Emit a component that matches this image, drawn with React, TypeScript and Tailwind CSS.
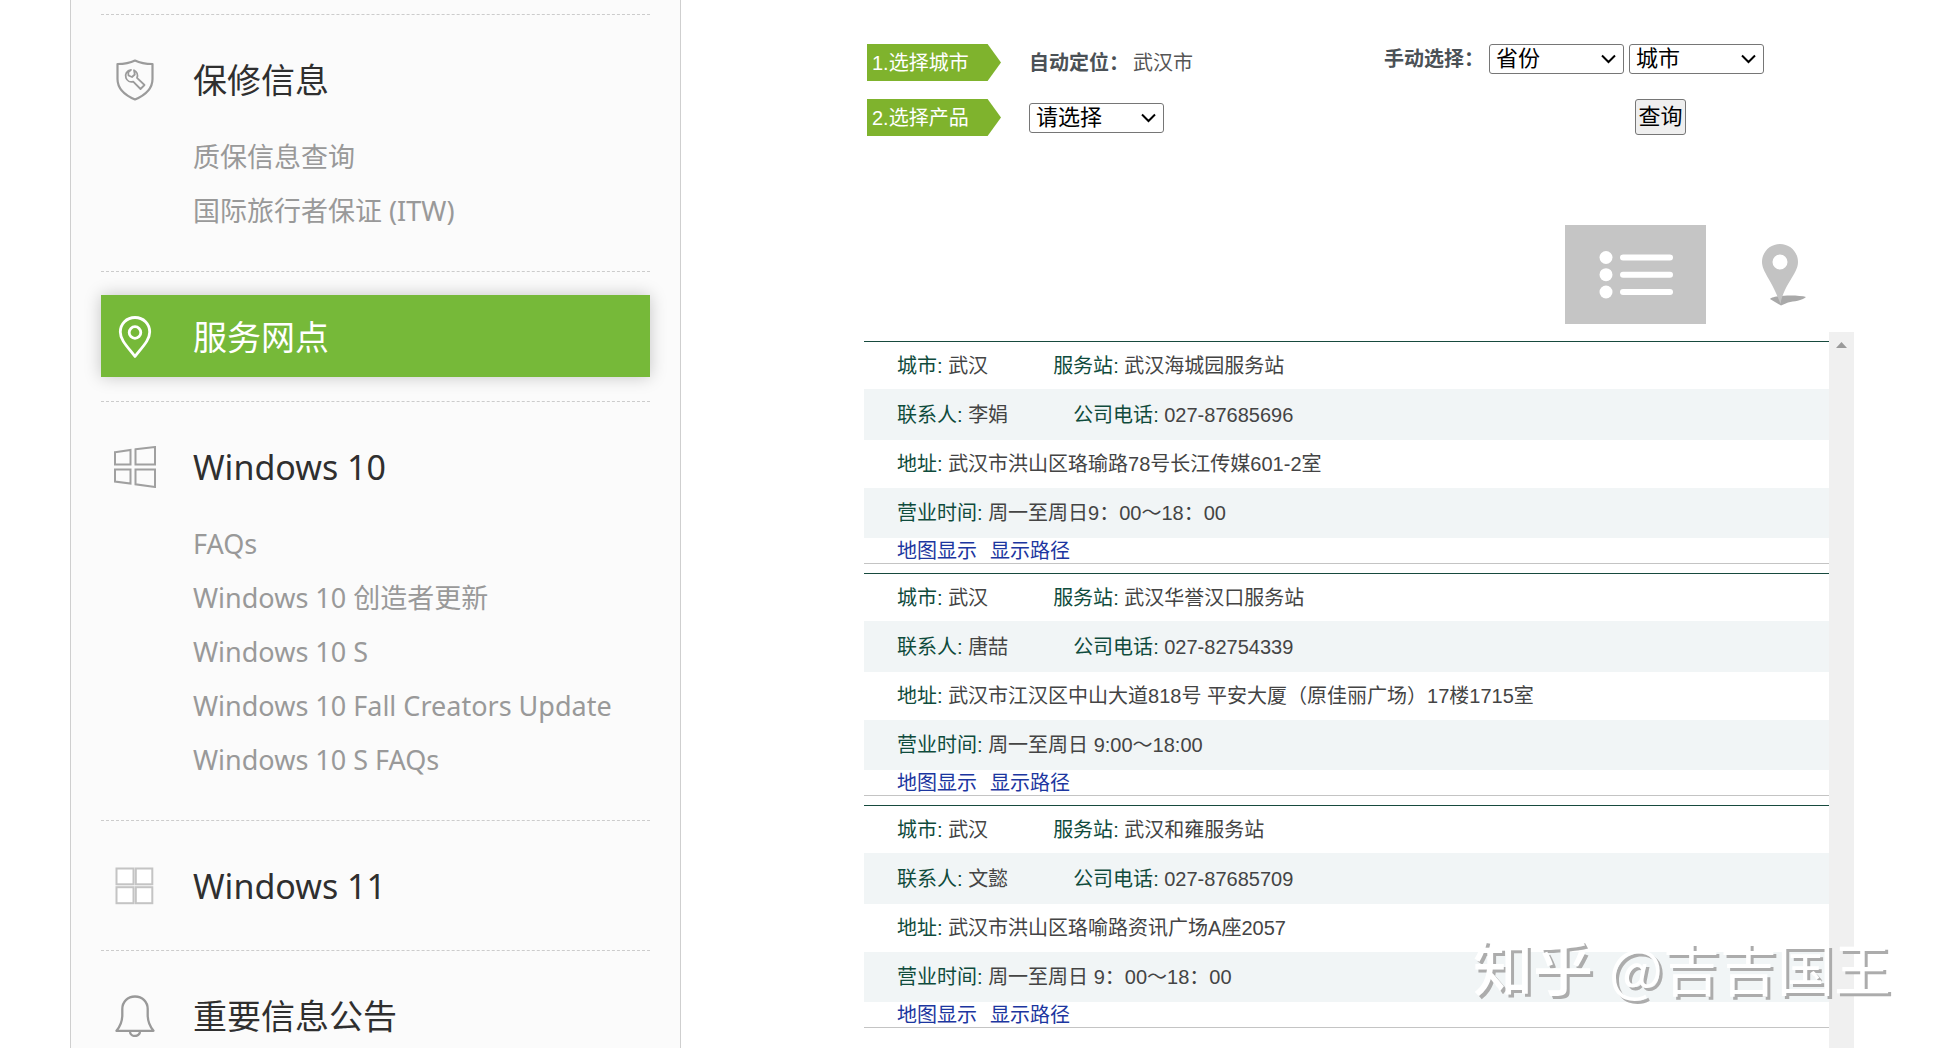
import React, { useState } from "react";

interface MenuSection {
  title: string;
  icon: React.ReactNode;
  active?: boolean;
  links?: string[];
}

interface Station {
  city: string;
  name: string;
  contact: string;
  phone: string;
  address: string;
  hours: string;
}

const ShieldIcon = () => (
  <svg width="42" height="42" viewBox="0 0 42 42" fill="none" stroke="#9b9b9b" strokeWidth="2.200" strokeLinejoin="round">
    <path d="M21 1.500C15 4.500 9 5 3.500 5V20c0 10 8 16.500 17.500 20.500C30.500 36.500 38.500 30 38.500 20V5C33 5 27 4.500 21 1.500Z" />
    <path d="M17 10.800a6 6 0 0 0-5 8.200 6 6 0 0 0 7.200 3.600l7.300 7.400 4-4-7.500-7.200a6 6 0 0 0-3-7.600l.8 4.300-2.800 2.500-3.500-1.500-.3-3.200Z" strokeWidth="1.800" />
  </svg>
);

const PinIcon = () => (
  <svg width="42" height="42" viewBox="0 0 42 42" fill="none" stroke="#fff" strokeWidth="2.800" strokeLinejoin="round">
    <path d="M21 1.500C12.500 1.500 6.300 8 6.300 16c0 8 7 14.500 14.700 24.500C28.700 30.500 35.700 24 35.700 16 35.700 8 29.500 1.500 21 1.500Z" />
    <circle cx="21" cy="16.500" r="5.800" />
  </svg>
);

const Windows10Icon = () => (
  <svg width="42" height="42" viewBox="0 0 42 42" fill="none" stroke="#a0a0a0" strokeWidth="2">
    <path d="M1 6.200 16.500 4V18.500H1Z" />
    <path d="M21.500 3.300 41 1V18.500H21.500Z" />
    <path d="M1 23.500H16.500V37.500L1 35.500Z" />
    <path d="M21.500 23.500H41V41L21.500 38.300Z" />
  </svg>
);

const Windows11Icon = () => (
  <svg width="42" height="42" viewBox="0 0 42 42" fill="#fff" stroke="#c4c4c4" strokeWidth="2">
    <rect x="2.500" y="3.500" width="17" height="15.800" />
    <rect x="21.800" y="3.500" width="16.500" height="15.800" />
    <rect x="2.500" y="22.200" width="17" height="16" />
    <rect x="21.800" y="22.200" width="16.500" height="16" />
  </svg>
);

const BellIcon = () => (
  <svg width="42" height="42" viewBox="0 0 42 42" fill="none" stroke="#999" strokeWidth="2.300" strokeLinejoin="round">
    <path d="M21 1.500C13.500 1.500 8.300 7 8.300 14v6c0 6-1 10-5.800 15.800H39.500C34.700 30 33.700 26 33.700 20v-6C33.700 7 28.500 1.500 21 1.500Z" />
    <path d="M16 36.500a5 4.500 0 0 0 10 0" />
  </svg>
);

const sections: MenuSection[] = [
  {
    title: "保修信息",
    icon: <ShieldIcon />,
    links: ["质保信息查询", "国际旅行者保证 (ITW)"],
  },
  { title: "服务网点", icon: <PinIcon />, active: true },
  {
    title: "Windows 10",
    icon: <Windows10Icon />,
    links: [
      "FAQs",
      "Windows 10 创造者更新",
      "Windows 10 S",
      "Windows 10 Fall Creators Update",
      "Windows 10 S FAQs",
    ],
  },
  { title: "Windows 11", icon: <Windows11Icon /> },
  { title: "重要信息公告", icon: <BellIcon /> },
];

const stations: Station[] = [
  {
    city: "武汉",
    name: "武汉海城园服务站",
    contact: "李娟",
    phone: "027-87685696",
    address: "武汉市洪山区珞瑜路78号长江传媒601-2室",
    hours: "周一至周日9：00～18：00",
  },
  {
    city: "武汉",
    name: "武汉华誉汉口服务站",
    contact: "唐喆",
    phone: "027-82754339",
    address: "武汉市江汉区中山大道818号 平安大厦（原佳丽广场）17楼1715室",
    hours: "周一至周日 9:00～18:00",
  },
  {
    city: "武汉",
    name: "武汉和雍服务站",
    contact: "文懿",
    phone: "027-87685709",
    address: "武汉市洪山区珞喻路资讯广场A座2057",
    hours: "周一至周日 9：00～18：00",
  },
];

const Sidebar: React.FC = () => (
  <aside className="ml-[70px] w-[611px] shrink-0 overflow-hidden border-x border-[#cfcfcf] bg-[#fbfbfb] px-[30px] pt-[14px] font-['Noto_Sans','Noto_Sans_CJK_SC',sans-serif]">
    <nav>
      {sections.map((section) => (
        <section key={section.title} className="border-t border-dashed border-[#cccccc] pt-[23px] pb-6">
          <h2>
            <a
              href="#"
              className={`flex h-[82px] items-center pt-[2px] pl-[13px] text-[34px] leading-none ${
                section.active
                  ? "bg-[#76b939] text-white shadow-[0_0_16px_rgba(0,0,0,0.22)]"
                  : "text-[#2f2f2f]"
              }`}
            >
              <span className="mr-[37px] shrink-0">{section.icon}</span>
              {section.title}
            </a>
          </h2>
          {section.links && (
            <ul className="mt-[10px] mb-[9px] pl-[92px]">
              {section.links.map((link) => (
                <li key={link} className="h-[54px] text-[27px] leading-[54px] whitespace-nowrap text-[#999999]">
                  <a href="#">{link}</a>
                </li>
              ))}
            </ul>
          )}
        </section>
      ))}
    </nav>
  </aside>
);

const StepBadge = ({ children }: { children: React.ReactNode }) => (
  <div className="flex h-[37px] w-[134px] items-center bg-[#7fb32d] pl-[5px] text-[20px] leading-none text-white [clip-path:polygon(0_0,90%_0,100%_50%,90%_100%,0_100%)]">
    {children}
  </div>
);

interface DropdownProps {
  label: string;
  placeholder: string;
}

const Dropdown: React.FC<DropdownProps> = ({ label, placeholder }) => (
  <div className="relative h-[30px] w-[135px]">
    <select
      aria-label={label}
      className="h-full w-full appearance-none rounded-[3px] border border-[#767676] bg-white pl-[6px] text-[22px] leading-[28px] text-black"
    >
      <option>{placeholder}</option>
    </select>
    <svg
      className="pointer-events-none absolute top-[10px] right-[8px]"
      width="15"
      height="10"
      viewBox="0 0 15 10"
      fill="none"
      stroke="#000"
      strokeWidth="2"
    >
      <path d="M1 1.500 7.500 8 14 1.500" />
    </svg>
  </div>
);

const Field = ({ label, value }: { label: string; value: string }) => (
  <span>
    <span className="text-[#0f4b3c]">{label}:</span> {value}
  </span>
);

const StationCard = ({ station }: { station: Station }) => (
  <li className="mb-[9px] border-t border-b border-t-[#174a3e] border-b-[#c4c4c4] text-[20px] whitespace-nowrap text-[#444444]">
    <div className="flex h-[47px] items-center gap-[65px] pl-[33px]">
      <Field label="城市" value={station.city} />
      <Field label="服务站" value={station.name} />
    </div>
    <div className="flex h-[51px] items-center gap-[65px] bg-[#f1f5f6] pl-[33px]">
      <Field label="联系人" value={station.contact} />
      <Field label="公司电话" value={station.phone} />
    </div>
    <div className="flex h-12 items-center pl-[33px]">
      <Field label="地址" value={station.address} />
    </div>
    <div className="flex h-[50px] items-center bg-[#f1f5f6] pl-[33px]">
      <Field label="营业时间" value={station.hours} />
    </div>
    <div className="flex h-[25px] items-center gap-[13px] pl-[33px] text-[#1c36a0]">
      <a href="#">地图显示</a>
      <a href="#">显示路径</a>
    </div>
  </li>
);

const App: React.FC = () => {
  const [view, setView] = useState<"list" | "map">("list");

  return (
    <div className="relative flex h-screen overflow-hidden bg-white font-['Liberation_Sans','Noto_Sans_CJK_SC',sans-serif]">
      <Sidebar />

      <main className="flex min-w-0 flex-1 flex-col pt-11 pr-[87px] pl-[183px]">
        {/* Search form */}
        <form className="flex items-start justify-between pr-[90px] pl-[3px]" onSubmit={(e) => e.preventDefault()}>
          <div className="flex flex-col gap-[18px]">
            <div className="flex items-center gap-7">
              <StepBadge>1.选择城市</StepBadge>
              <p className="text-[20px] text-[#555555]">
                <b className="mr-1 text-[#4b5156]">自动定位：</b>武汉市
              </p>
            </div>
            <div className="flex items-center gap-7">
              <StepBadge>2.选择产品</StepBadge>
              <Dropdown label="产品" placeholder="请选择" />
            </div>
          </div>

          <div className="flex flex-col gap-[25px]">
            <div className="flex items-center gap-[5px]">
              <b className="text-[20px] leading-[30px] text-[#4b5156]">手动选择：</b>
              <Dropdown label="省份" placeholder="省份" />
              <Dropdown label="城市" placeholder="城市" />
            </div>
            <button
              type="submit"
              className="mr-[78px] h-9 w-[51px] self-end rounded-[3px] border border-[#767676] bg-[#efefef] text-[22px] leading-none text-black"
            >
              查询
            </button>
          </div>
        </form>

        {/* List / map switch */}
        <div className="mt-[89px] flex shrink-0 justify-end">
          <button
            type="button"
            aria-label="列表"
            aria-pressed={view === "list"}
            onClick={() => setView("list")}
            className="flex h-[99px] w-[141px] items-center justify-center bg-[#c5c5c5]"
          >
            <svg width="74" height="50" viewBox="0 0 74 50" fill="#fff">
              <circle cx="7" cy="7.500" r="6.500" />
              <circle cx="7" cy="24.700" r="6.500" />
              <circle cx="7" cy="42" r="6.500" />
              <rect x="21" y="4.500" width="53" height="6" rx="3" />
              <rect x="21" y="21.700" width="53" height="6" rx="3" />
              <rect x="21" y="39" width="53" height="6" rx="3" />
            </svg>
          </button>
          <button
            type="button"
            aria-label="地图"
            aria-pressed={view === "map"}
            onClick={() => setView("map")}
            className="flex h-[99px] w-[148px] items-center justify-center pl-2"
          >
            <svg width="44" height="62" viewBox="0 0 44 62">
              <path d="M8 55c3-4 28-4.500 36-2-4 4-12 4-18 5.500L19 61.500Z" fill="#a9a9a9" />
              <path
                d="M18 0C8 0 0 8 0 18c0 10 10 18 18.500 42C22 40 36 30 36 18 36 8 28 0 18 0Zm0 10.500a7.500 7.500 0 1 1 0 15 7.500 7.500 0 0 1 0-15Z"
                fill="#c3c3c3"
                fillRule="evenodd"
              />
            </svg>
          </button>
        </div>

        {/* Results */}
        <div className="mt-2 flex min-h-0 flex-1">
          <ul className="min-w-0 flex-1 overflow-hidden pt-[9px]">
            {stations.map((station) => (
              <StationCard key={station.name} station={station} />
            ))}
          </ul>
          <div className="flex w-[25px] justify-center bg-[#f0f0f0] pt-[10px]">
            <svg width="11" height="6" viewBox="0 0 11 6" fill="#9a9a9a">
              <path d="M5.500 0 11 6H0Z" />
            </svg>
          </div>
        </div>
      </main>

      {/* Watermark */}
      <div className="pointer-events-none absolute right-[50px] bottom-[50px] flex items-baseline gap-4 font-['Noto_Sans_CJK_SC',sans-serif] text-[57px] leading-[64px] whitespace-nowrap text-white [text-shadow:3px_3px_0_#acacac]">
        <span className="text-[60px] font-medium">知乎</span>
        <span>@吉吉国王</span>
      </div>
    </div>
  );
};

export default App;
